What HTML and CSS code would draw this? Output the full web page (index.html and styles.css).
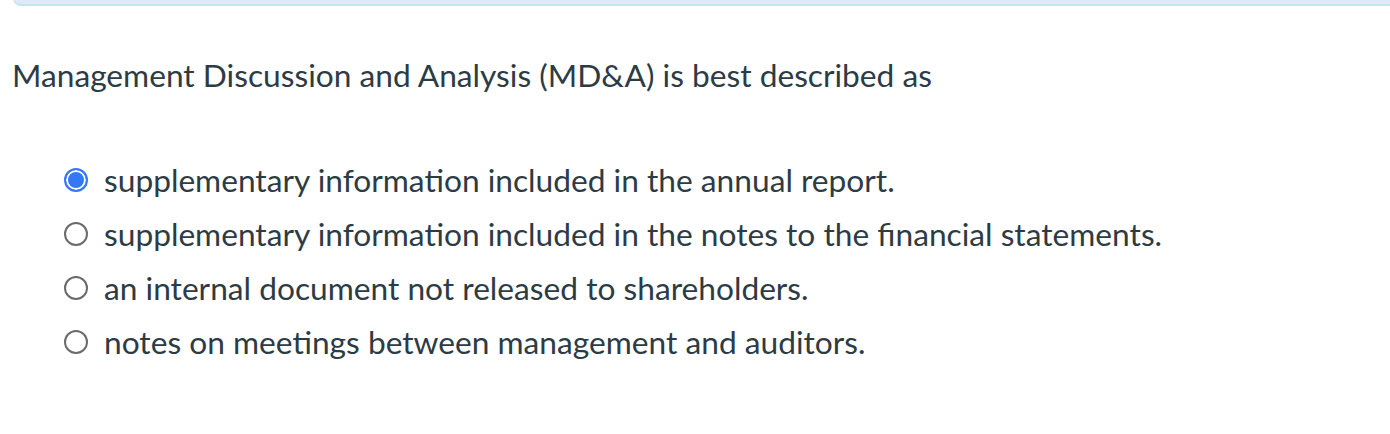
FILE: index.html
```html
<!DOCTYPE html>
<html>
<head>
<meta charset="utf-8">
<link rel="stylesheet" href="styles.css">
</head>
<body>
<div class="banner"></div>
<div class="question">Management Discussion and Analysis (MD&amp;A) is best described as</div>
<div class="answers">
  <label class="answer"><span class="radio checked"></span><span class="text">supplementary information included in the annual report.</span></label>
  <label class="answer"><span class="radio"></span><span class="text">supplementary information included in the notes to the financial statements.</span></label>
  <label class="answer"><span class="radio"></span><span class="text">an internal document not released to shareholders.</span></label>
  <label class="answer"><span class="radio"></span><span class="text">notes on meetings between management and auditors.</span></label>
</div>
</body>
</html>
```
FILE: styles.css
```css
html, body {
  margin: 0;
  padding: 0;
  background: #fff;
}
body {
  width: 1390px;
  height: 434px;
  overflow: hidden;
  font-family: Lato, "Open Sans", sans-serif;
  color: #2d3b45;
}
.banner {
  margin-left: 13px;
  height: 6px;
  background: #dcebf6;
  border-bottom: 2px solid #c4e4ee;
  border-left: 1px solid #c4e4ee;
  border-bottom-left-radius: 8px;
  margin-top: -2px;
}
.question {
  font-size: 31.7px;
  line-height: 40px;
  padding: 49px 0 0 12px;
}
.answers {
  display: flex;
  flex-direction: column;
  padding: 58px 0 0 64px;
}
.answer {
  display: flex;
  align-items: center;
  height: 54px;
  font-size: 31.7px;
}
.radio {
  width: 24px;
  height: 24px;
  box-sizing: border-box;
  border-radius: 50%;
  border: 2px solid #6b6b6b;
  margin-right: 16px;
  flex: none;
  background: #fff;
}
.radio.checked {
  border: 2px solid #3478f6;
  box-shadow: inset 0 0 0 2px #fff;
  background: #3478f6;
}
```
